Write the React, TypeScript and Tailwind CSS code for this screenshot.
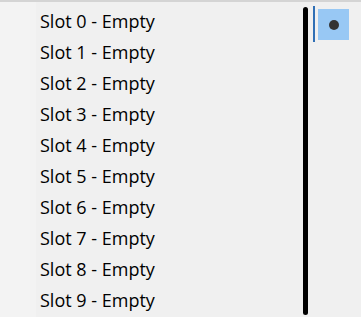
import React from 'react'

const SLOTS = Array.from({ length: 10 }, (_, i) => `Slot ${i} - Empty`)

export default function App() {
  return (
    <div className="w-[361px] h-[317px] bg-[#f0f0f0] border-t-2 border-[#d4d4d4] overflow-hidden" style={{ fontFamily: '"Open Sans", "Noto Sans", sans-serif' }}>
      <div className="flex h-full">
        {/* left gutter */}
        <div className="w-[36px] h-full shrink-0 bg-[#f3f3f3]" />

        {/* slot list */}
        <ul className="flex flex-col pt-[3px] pl-[4px] w-[267px] shrink-0">
          {SLOTS.map(s => (
            <li key={s} className="h-[31px] flex items-center text-[18px] text-black leading-none">
              {s}
            </li>
          ))}
        </ul>

        {/* thick bar */}
        <div className="mt-[5px] w-[5px] h-[308px] shrink-0 bg-black rounded-full" />

        {/* selected marker + toggle box */}
        <div className="flex items-start ml-[5px] mt-[4px] shrink-0">
          <div className="w-[2px] h-[36px] bg-[#2f6fb5]" />
          <div className="ml-[3px] mt-[3px] w-[31px] h-[31px] bg-[#98c8f4] flex items-center justify-center">
            <span className="w-[10px] h-[10px] rounded-full bg-[#333333]" />
          </div>
        </div>
      </div>
    </div>
  )
}
